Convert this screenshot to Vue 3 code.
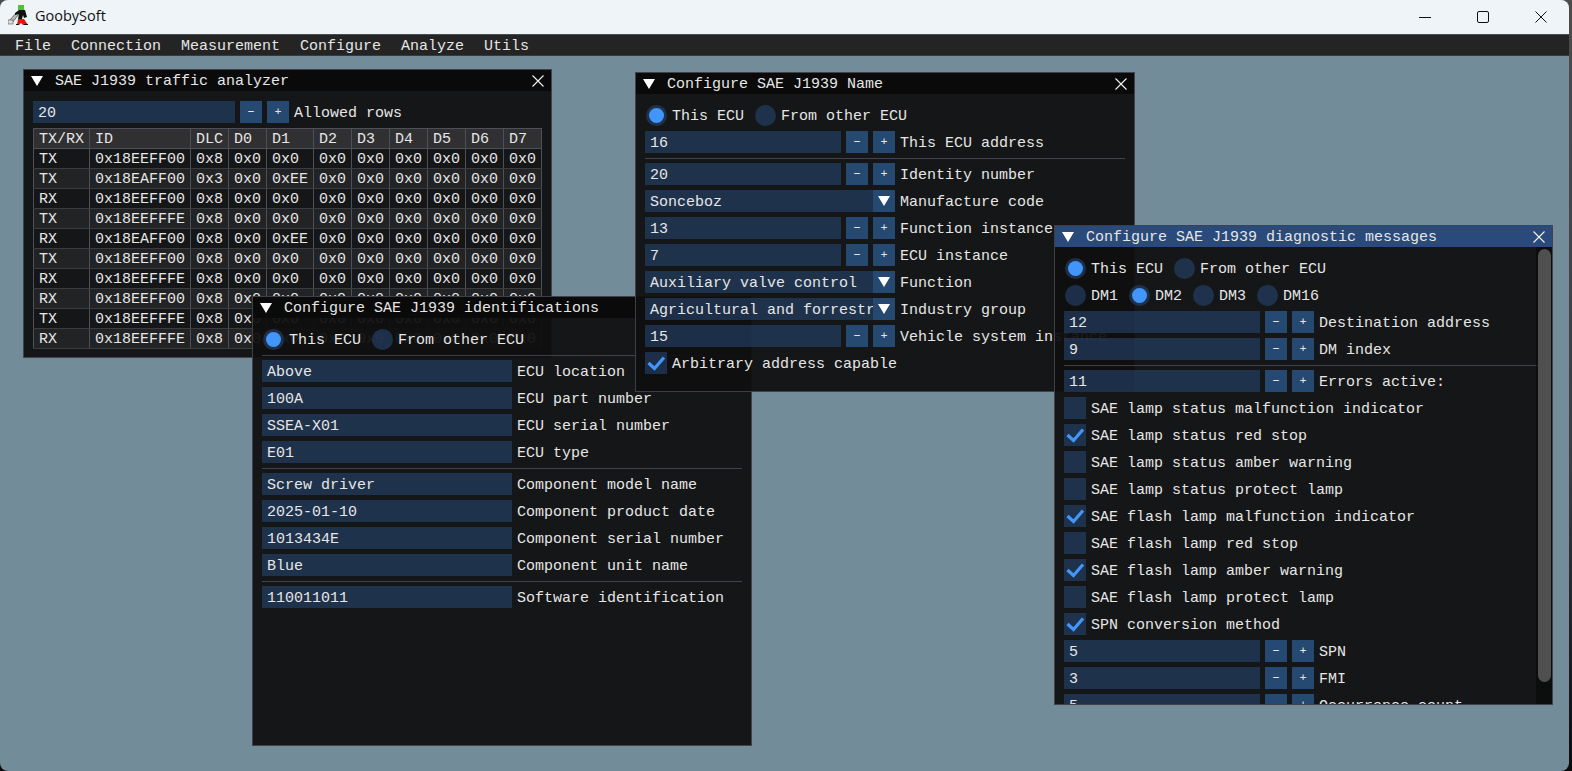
<script setup>
const num = (value, label) => ({ kind: 'num', value, label })
const text = (value, label) => ({ kind: 'text', value, label })
const combo = (value, label) => ({ kind: 'combo', value, label })
const check = (on, label) => ({ kind: 'check', on, label })
const sep = { kind: 'sep' }
const radios = (...items) => ({ kind: 'radios', items })
const ecu = radios({ label: 'This ECU', on: true }, { label: 'From other ECU', on: false })

const menu = ['File', 'Connection', 'Measurement', 'Configure', 'Analyze', 'Utils']
const head = ['TX/RX', 'ID', 'DLC', 'D0', 'D1', 'D2', 'D3', 'D4', 'D5', 'D6', 'D7']
const colWidths = [56, 101, 38, 38, 47, 38, 38, 38, 38, 38, 38]
const traffic = [
  ['TX', '0x18EEFF00', '0x8', '0x0'],
  ['TX', '0x18EAFF00', '0x3', '0xEE'],
  ['RX', '0x18EEFF00', '0x8', '0x0'],
  ['TX', '0x18EEFFFE', '0x8', '0x0'],
  ['RX', '0x18EAFF00', '0x8', '0xEE'],
  ['TX', '0x18EEFF00', '0x8', '0x0'],
  ['RX', '0x18EEFFFE', '0x8', '0x0'],
  ['RX', '0x18EEFF00', '0x8', '0x0'],
  ['TX', '0x18EEFFFE', '0x8', '0x0'],
  ['RX', '0x18EEFFFE', '0x8', '0x0']
].map(([dir, id, dlc, d1]) => [dir, id, dlc, '0x0', d1, '0x0', '0x0', '0x0', '0x0', '0x0', '0x0'])

const windows = [
  {
    id: 'traffic',
    title: 'SAE J1939 traffic analyzer',
    close: true,
    rows: [num('20', 'Allowed rows'), { kind: 'table' }]
  },
  {
    id: 'ident',
    title: 'Configure SAE J1939 identifications',
    close: false,
    rows: [
      ecu, sep,
      text('Above', 'ECU location'),
      text('100A', 'ECU part number'),
      text('SSEA-X01', 'ECU serial number'),
      text('E01', 'ECU type'),
      sep,
      text('Screw driver', 'Component model name'),
      text('2025-01-10', 'Component product date'),
      text('1013434E', 'Component serial number'),
      text('Blue', 'Component unit name'),
      sep,
      text('110011011', 'Software identification')
    ]
  },
  {
    id: 'name',
    title: 'Configure SAE J1939 Name',
    close: true,
    rows: [
      ecu,
      num('16', 'This ECU address'),
      sep,
      num('20', 'Identity number'),
      combo('Sonceboz', 'Manufacture code'),
      num('13', 'Function instance'),
      num('7', 'ECU instance'),
      combo('Auxiliary valve control', 'Function'),
      combo('Agricultural and forrestry', 'Industry group'),
      num('15', 'Vehicle system instance'),
      check(true, 'Arbitrary address capable')
    ]
  },
  {
    id: 'diag',
    title: 'Configure SAE J1939 diagnostic messages',
    close: true,
    active: true,
    scroll: true,
    rows: [
      ecu,
      radios(
        { label: 'DM1', on: false },
        { label: 'DM2', on: true },
        { label: 'DM3', on: false },
        { label: 'DM16', on: false }
      ),
      num('12', 'Destination address'),
      num('9', 'DM index'),
      sep,
      num('11', 'Errors active:'),
      check(false, 'SAE lamp status malfunction indicator'),
      check(true, 'SAE lamp status red stop'),
      check(false, 'SAE lamp status amber warning'),
      check(false, 'SAE lamp status protect lamp'),
      check(true, 'SAE flash lamp malfunction indicator'),
      check(false, 'SAE flash lamp red stop'),
      check(true, 'SAE flash lamp amber warning'),
      check(false, 'SAE flash lamp protect lamp'),
      check(true, 'SPN conversion method'),
      num('5', 'SPN'),
      num('3', 'FMI'),
      num('5', 'Occurrence count')
    ]
  }
]
</script>

<template>
  <div class="shell">
    <div class="app">
      <header class="caption">
        <svg class="logo" width="24" height="24" viewBox="0 0 24 24">
          <path d="M1 17 L9 8 L11 10 L4 19 Z" fill="#b9b9b9" stroke="#444" stroke-width="0.7" />
          <rect x="0" y="16" width="5" height="4" fill="#ddd" stroke="#555" stroke-width="0.6" />
          <rect x="10" y="1" width="6" height="5" fill="#4fc23a" />
          <path d="M11 6 H17 L19 13 L16 14 L15 11 L14 15 H10 L11 10 L7 11 L7 9 Z" fill="#111" />
          <path d="M10 15 H16 L20 21 H15 L13 19 L11 21 H9 Z" fill="#e8140f" />
          <rect x="8" y="20" width="3" height="1" fill="#111" />
          <rect x="16" y="20" width="4" height="1" fill="#111" />
        </svg>
        <span class="app-name">GoobySoft</span>
        <div class="caption-btns">
          <svg width="12" height="12" viewBox="0 0 12 12"><path d="M0 6.5 H12" stroke="#111" stroke-width="1" /></svg>
          <svg width="12" height="12" viewBox="0 0 12 12"><rect x="0.5" y="0.5" width="11" height="11" rx="1.5" fill="none" stroke="#111" stroke-width="1" /></svg>
          <svg width="12" height="12" viewBox="0 0 12 12"><path d="M0.5 0.5 L11.5 11.5 M11.5 0.5 L0.5 11.5" stroke="#111" stroke-width="1" /></svg>
        </div>
      </header>

      <nav class="menubar">
        <span v-for="m in menu" :key="m" class="menu-item">{{ m }}</span>
      </nav>

      <main class="desktop">
        <section v-for="w in windows" :key="w.id" class="win" :class="'win-' + w.id">
          <div class="titlebar" :class="{ active: w.active }">
            <svg class="tri" width="12" height="10" viewBox="0 0 12 10"><path d="M0 0 H12 L6 10 Z" fill="#fff" /></svg>
            <span class="title-text">{{ w.title }}</span>
            <svg v-if="w.close" class="close" width="12" height="12" viewBox="0 0 12 12"><path d="M0.5 0.5 L11.5 11.5 M11.5 0.5 L0.5 11.5" stroke="#f2f2f2" stroke-width="1.1" /></svg>
          </div>

          <div class="body">
            <template v-for="(r, i) in w.rows" :key="i">
              <div v-if="r.kind === 'sep'" class="sep"></div>

              <div v-else-if="r.kind === 'radios'" class="row radios">
                <span v-for="item in r.items" :key="item.label" class="radio-item">
                  <span class="radio"><span v-if="item.on" class="dot"></span></span>
                  <span class="label">{{ item.label }}</span>
                </span>
              </div>

              <div v-else-if="r.kind === 'num'" class="row">
                <span class="frame num-input">{{ r.value }}</span>
                <span class="btn"><span class="sign">−</span></span>
                <span class="btn"><span class="sign">+</span></span>
                <span class="label">{{ r.label }}</span>
              </div>

              <div v-else-if="r.kind === 'text'" class="row">
                <span class="frame text-input">{{ r.value }}</span>
                <span class="label">{{ r.label }}</span>
              </div>

              <div v-else-if="r.kind === 'combo'" class="row">
                <span class="combo">
                  <span class="combo-value">{{ r.value }}</span>
                  <span class="combo-arrow">
                    <svg width="12" height="10" viewBox="0 0 12 10"><path d="M0 0 H12 L6 10 Z" fill="#fff" /></svg>
                  </span>
                </span>
                <span class="label">{{ r.label }}</span>
              </div>

              <div v-else-if="r.kind === 'check'" class="row">
                <span class="checkbox">
                  <svg v-if="r.on" width="22" height="22" viewBox="0 0 22 22"><path d="M3.5 11 L9.5 16.5 L19 5.5" fill="none" stroke="#4296fa" stroke-width="3.2" /></svg>
                </span>
                <span class="label">{{ r.label }}</span>
              </div>

              <table v-else-if="r.kind === 'table'" class="traffic">
                <colgroup>
                  <col v-for="(c, ci) in colWidths" :key="ci" :style="{ width: c + 'px' }" />
                </colgroup>
                <thead>
                  <tr><th v-for="h in head" :key="h">{{ h }}</th></tr>
                </thead>
                <tbody>
                  <tr v-for="(row, ri) in traffic" :key="ri">
                    <td v-for="(cell, ci) in row" :key="ci">{{ cell }}</td>
                  </tr>
                </tbody>
              </table>
            </template>
          </div>

          <div v-if="w.scroll" class="scrollbar"><div class="grab"></div></div>
        </section>
      </main>
    </div>
  </div>
</template>

<style>
html, body { margin: 0; padding: 0; overflow: hidden; }
</style>

<style scoped>
.shell {
  width: 1572px;
  height: 771px;
  background: linear-gradient(#4c4c4c, #3c3c3c 60%, #0c0c0c);
  font-family: "Liberation Mono", "DejaVu Sans Mono", monospace;
  font-size: 15px;
  line-height: 22px;
  color: #e6e6e6;
}
.app {
  width: 1569px;
  height: 771px;
  border-radius: 8px;
  overflow: hidden;
  display: flex;
  flex-direction: column;
  background: #738c99;
}
.caption {
  height: 34px;
  flex: none;
  display: flex;
  align-items: center;
  background: #eff4f9;
  padding-left: 8px;
  box-sizing: border-box;
}
.logo { flex: none; margin-top: -2px; }
.app-name {
  margin-left: 3px;
  margin-top: -2px;
  font-family: "Open Sans", "Noto Sans", sans-serif;
  font-size: 14.5px;
  line-height: 20px;
  color: #111;
}
.caption-btns {
  margin-left: auto;
  display: flex;
  gap: 46px;
  padding-right: 22px;
}
.menubar {
  height: 22px;
  flex: none;
  box-sizing: border-box;
  display: flex;
  align-items: center;
  padding-left: 5px;
  background: #242424;
  border-top: 1px solid #4b4b52;
  border-bottom: 1px solid #3a3a3e;
}
.menu-item { padding: 2px 10px 0; line-height: 20px; margin-bottom: -2px; }
.desktop { flex: 1; position: relative; }

.win {
  position: absolute;
  box-sizing: border-box;
  background: rgba(15, 15, 15, 0.94);
  border: 1px solid rgba(110, 110, 128, 0.5);
  overflow: hidden;
}
.win-traffic { left: 23px; top: 13px; width: 529px; height: 289px; }
.win-ident { left: 252px; top: 240px; width: 500px; height: 450px; }
.win-name { left: 635px; top: 16px; width: 500px; height: 320px; }
.win-diag { left: 1054px; top: 169px; width: 499px; height: 480px; }

.titlebar {
  height: 21px;
  display: flex;
  align-items: center;
  background: #0a0a0a;
  padding: 0 7px 0 7px;
}
.titlebar.active { background: #294a7a; }
.tri { flex: none; }
.title-text { margin-left: 12px; padding-top: 2px; white-space: nowrap; }
.close { margin-left: auto; flex: none; }

.body {
  box-sizing: border-box;
  padding: 10px 9px 0;
  display: flex;
  flex-direction: column;
  gap: 5px;
}
.row {
  height: 22px;
  flex: none;
  display: flex;
  align-items: center;
  gap: 5px;
  white-space: nowrap;
}
.label { padding-top: 3px; }
.sep {
  height: 1px;
  flex: none;
  margin-bottom: -1px;
  background: rgba(110, 110, 128, 0.5);
}
.frame {
  flex: none;
  box-sizing: border-box;
  height: 22px;
  line-height: 25px;
  padding-left: 5px;
  background: rgba(41, 74, 122, 0.54);
}
.num-input { width: 196px; }
.win-traffic .num-input { width: 202px; }
.text-input { width: 250px; }
.btn {
  flex: none;
  width: 22px;
  height: 22px;
  display: flex;
  align-items: center;
  justify-content: center;
  background: rgba(66, 150, 250, 0.4);
}
.sign { font-size: 11px; font-family: "DejaVu Sans Mono", monospace; }
.radios { gap: 10px; }
.radio-item { display: flex; align-items: center; gap: 5px; }
.radio {
  flex: none;
  width: 21px;
  height: 21px;
  margin: 0 0.5px;
  border-radius: 50%;
  display: flex;
  align-items: center;
  justify-content: center;
  background: rgba(41, 74, 122, 0.54);
}
.dot {
  width: 15px;
  height: 15px;
  border-radius: 50%;
  background: #4296fa;
}
.checkbox {
  flex: none;
  width: 22px;
  height: 22px;
  display: block;
  background: rgba(41, 74, 122, 0.54);
}
.checkbox svg { display: block; }
.combo {
  flex: none;
  width: 250px;
  height: 22px;
  display: flex;
}
.combo-value {
  flex: none;
  box-sizing: border-box;
  width: 228px;
  line-height: 25px;
  padding-left: 5px;
  overflow: hidden;
  white-space: nowrap;
  background: rgba(41, 74, 122, 0.54);
}
.combo-arrow {
  flex: none;
  width: 22px;
  display: flex;
  align-items: center;
  justify-content: center;
  background: rgba(66, 150, 250, 0.4);
}

.traffic {
  flex: none;
  width: 509px;
  table-layout: fixed;
  border-collapse: collapse;
  border: 1px solid #4f4f59;
}
.traffic th,
.traffic td {
  height: 20px;
  box-sizing: border-box;
  padding: 3px 0 0 5px;
  line-height: 16px;
  font-weight: normal;
  text-align: left;
  white-space: nowrap;
  overflow: hidden;
  border-left: 1px solid #4f4f59;
  border-right: 1px solid #4f4f59;
}
.traffic th { background: #303033; border-bottom: 1px solid #4f4f59; }
.traffic td { border-bottom: 1px solid #3b3b40; }
.traffic tbody tr:nth-child(even) td { background: rgba(255, 255, 255, 0.06); }

.scrollbar {
  position: absolute;
  top: 21px;
  right: 0;
  bottom: 0;
  width: 16px;
  background: rgba(5, 5, 5, 0.53);
}
.grab {
  position: absolute;
  top: 2px;
  left: 2px;
  width: 13px;
  height: 433px;
  border-radius: 7px;
  background: #4f4f4f;
}
</style>
